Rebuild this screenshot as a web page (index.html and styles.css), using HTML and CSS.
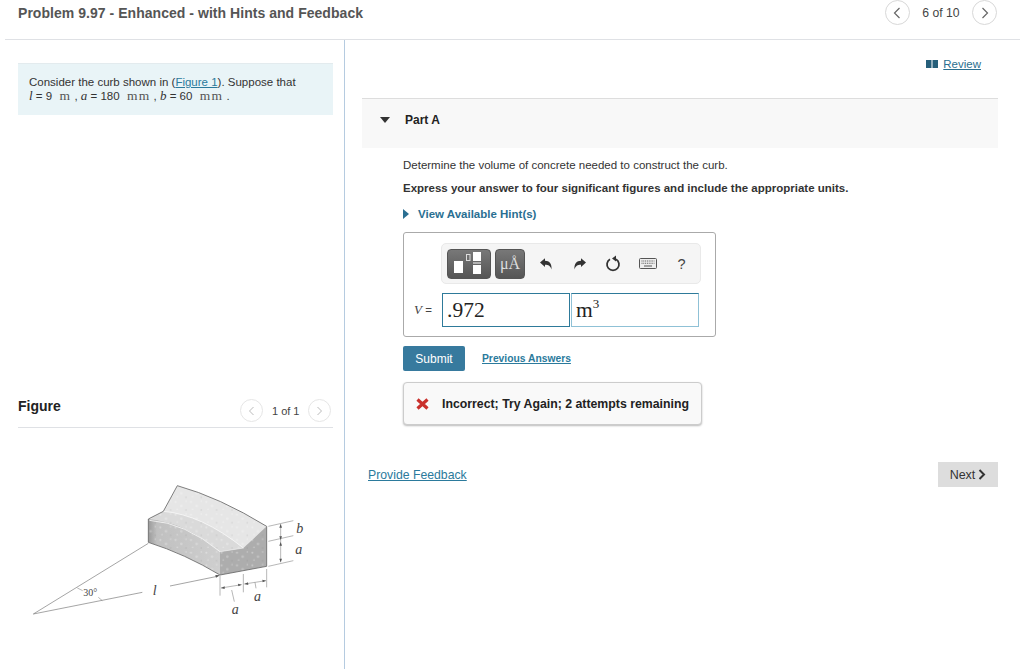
FILE: index.html
```html
<!DOCTYPE html>
<html lang="en">
<head>
<meta charset="utf-8">
<title>Problem 9.97</title>
<link rel="stylesheet" href="styles.css">
</head>
<body>
<header class="top">
  <h1 class="title">Problem 9.97 - Enhanced - with Hints and Feedback</h1>
  <nav class="pager">
    <span class="circle"><svg width="8" height="12" viewBox="0 0 8 12"><path d="M6.500 1L1.500 6l5 5" fill="none" stroke="#666" stroke-width="1.200"/></svg></span>
    <span class="pager-text">6 of 10</span>
    <span class="circle"><svg width="8" height="12" viewBox="0 0 8 12"><path d="M1.500 1l5 5-5 5" fill="none" stroke="#666" stroke-width="1.200"/></svg></span>
  </nav>
</header>
<div class="columns">
  <aside class="left">
    <div class="info">
      Consider the curb shown in (<a href="#" class="link">Figure 1</a>). Suppose that<br>
      <i class="mi">l</i> = 9 &nbsp;<span class="mu">m</span> , <i class="mi">a</i> = 180 &nbsp;<span class="mu">mm</span> , <i class="mi">b</i> = 60 &nbsp;<span class="mu">mm</span> .
    </div>
    <div class="fig-head">
      <h2 class="fig-title">Figure</h2>
      <div class="fig-pager">
        <span class="circle small"><svg width="7" height="10" viewBox="0 0 7 10"><path d="M5.500 1l-4 4 4 4" fill="none" stroke="#bbb" stroke-width="1"/></svg></span>
        <span class="fig-count">1 of 1</span>
        <span class="circle small"><svg width="7" height="10" viewBox="0 0 7 10"><path d="M1.500 1l4 4-4 4" fill="none" stroke="#bbb" stroke-width="1"/></svg></span>
      </div>
    </div>
    <svg class="figure" width="300" height="150" viewBox="0 0 900 450">
      <defs>
        <filter id="soft"><feGaussianBlur stdDeviation="1.400"/></filter>
        <pattern id="speck" width="46" height="38" patternUnits="userSpaceOnUse">
          <circle cx="7" cy="8" r="3" fill="#fff" opacity=".35"/>
          <circle cx="24" cy="20" r="4" fill="#fff" opacity=".25"/>
          <circle cx="38" cy="6" r="2" fill="#fff" opacity=".4"/>
          <circle cx="12" cy="30" r="2.500" fill="#fff" opacity=".3"/>
          <circle cx="38" cy="32" r="2.500" fill="#666" opacity=".12"/>
        </pattern>
        <linearGradient id="frontFace" x1="0" x2="1" y1="0" y2="0">
          <stop offset="0" stop-color="#9a9a9a"/>
          <stop offset=".12" stop-color="#c0c0c0"/>
          <stop offset="1" stop-color="#cfcfcf"/>
        </linearGradient>
      </defs>
      <g filter="url(#soft)">
        <path d="M472 35Q598 70 740 157L670 222Q545 122 430 112Z" fill="#e6e6e6"/>
        <path d="M472 35Q598 70 740 157L670 222Q545 122 430 112Z" fill="url(#speck)"/>
        <path d="M385 135L430 112Q545 122 670 222L600 233Q495 142 385 135Z" fill="#dadada"/>
        <path d="M385 135L430 112Q545 122 670 222L600 233Q495 142 385 135Z" fill="url(#speck)"/>
        <path d="M385 135Q495 142 600 233V303Q495 240 385 205Z" fill="url(#frontFace)"/>
        <path d="M385 135Q495 142 600 233V303Q495 240 385 205Z" fill="url(#speck)"/>
        <path d="M600 233L670 222L740 157V277L600 303Z" fill="#adadad"/>
        <path d="M600 233L670 222L740 157V277L600 303Z" fill="url(#speck)"/>
        <path d="M388 139Q495 146 600 233M430 112Q545 122 670 222" fill="none" stroke="#f6f6f6" stroke-width="2.500"/>
        <path d="M600 233L670 222" fill="none" stroke="#eee" stroke-width="2"/>
        <path d="M430 112L472 35Q598 70 740 157V277L600 303Q495 240 385 205V135L430 112" fill="none" stroke="#666" stroke-width="2.500"/>
        <path d="M385 208L40 420L367 355M450 336L592 307" fill="none" stroke="#777" stroke-width="2"/>
        <path d="M745 157L820 140M745 202L820 185M745 277L820 260M782 150V265M600 305V365M670 300V355M740 285V340M603 342L665 332M673 330L738 320M635 348L643 383M705 325L708 343M172 342L188 350M235 370L247 380" fill="none" stroke="#777" stroke-width="1.600"/>
        <path d="M600 304l-14-1 2 8zM782 150l-4 11h8zM782 198l-4-11h8zM782 204l-4 11h8zM782 265l-4-11h8zM603 342l11-5v8zM665 332l-11-3 1 8zM673 330l11-5 1 8zM738 320l-11-3 1 8z" fill="#555"/>
      </g>
      <text x="190" y="365" class="fig-small">30°</text>
      <text x="398" y="362" class="fig-label">l</text>
      <text x="829" y="176" class="fig-label">b</text>
      <text x="826" y="240" class="fig-label">a</text>
      <text x="702" y="382" class="fig-label">a</text>
      <text x="635" y="420" class="fig-label">a</text>
    </svg>
  </aside>
  <main class="right">
    <div class="review-row">
      <a href="#" class="review">
        <svg width="12" height="8" viewBox="0 0 12 8"><path d="M0 0h5.500v8H0zM6.500 0H12v8H6.500z" fill="#265f7a"/></svg>
        <span class="review-text">Review</span>
      </a>
    </div>
    <section class="part">
      <svg class="part-caret" width="10" height="6" viewBox="0 0 10 6"><path d="M0 0h10L5 6z" fill="#333"/></svg>
      <span class="part-title">Part A</span>
    </section>
    <div class="body">
      <p class="q">Determine the volume of concrete needed to construct the curb.</p>
      <p class="express">Express your answer to four significant figures and include the appropriate units.</p>
      <a href="#" class="hint">
        <svg width="6" height="10" viewBox="0 0 6 10"><path d="M0 0l6 5-6 5z" fill="#2a6f92"/></svg>
        View Available Hint(s)
      </a>
      <div class="answer">
        <div class="toolbar">
          <span class="tool tool-frac">
            <svg width="38" height="24" viewBox="0 0 38 24">
              <rect x="4" y="9" width="9" height="12" fill="#fff"/>
              <rect x="16.500" y="2.500" width="3.500" height="6" fill="none" stroke="#ddd"/>
              <rect x="23" y="0" width="8" height="9" fill="#fff"/>
              <rect x="23" y="10.500" width="8" height="1" fill="#fff"/>
              <rect x="23" y="13" width="8" height="9" fill="#fff"/>
            </svg>
          </span>
          <span class="tool tool-mu">μÅ</span>
          <span class="icon-btn icon-undo"><svg width="14" height="14" viewBox="0 0 14 13"><path d="M1 5L6 .8V3.200C10.500 3.200 13 6 12.500 12 11.500 8.500 9.500 7.200 6 7.200V9.500z" fill="#333"/></svg></span>
          <span class="icon-btn icon-redo"><svg width="14" height="14" viewBox="0 0 14 13"><path d="M13 5L8 .8V3.200C3.500 3.200 1 6 1.500 12 2.500 8.500 4.500 7.200 8 7.200V9.500z" fill="#333"/></svg></span>
          <span class="icon-btn icon-reset"><svg width="16" height="17" viewBox="0 0 16 17"><path d="M5 4.200A6 6 0 1 0 11 4.200" fill="none" stroke="#333" stroke-width="1.800"/><path d="M7.500 1v6L3.500 4z" fill="#333" transform="translate(3.500 -.5)"/></svg></span>
          <span class="icon-btn icon-keys"><svg width="18" height="11" viewBox="0 0 18 11"><rect x=".5" y=".5" width="17" height="10" rx="1" fill="#eee" stroke="#555"/><path d="M2.500 3h13M2.500 5.300h13" stroke="#555" stroke-width="1.100" stroke-dasharray="1 .8"/><path d="M5 8h8" stroke="#555"/></svg></span>
          <span class="icon-btn icon-help">?</span>
        </div>
        <div class="input-row">
          <span class="var"><i class="var-v">V</i> =</span>
          <span class="field field-value">.972</span>
          <span class="field field-unit">m<sup class="sup">3</sup></span>
        </div>
      </div>
      <div class="actions">
        <button class="submit" type="button">Submit</button>
        <a href="#" class="prev">Previous Answers</a>
      </div>
      <div class="alert">
        <svg width="13" height="12" viewBox="0 0 13 12"><path d="M1.500 1.500L11.500 10.500M11.500 1.500L1.500 10.500" stroke="#c9302c" stroke-width="3.200"/></svg>
        <span class="alert-text">Incorrect; Try Again; 2 attempts remaining</span>
      </div>
    </div>
    <div class="foot">
      <a href="#" class="feedback">Provide Feedback</a>
      <button class="next" type="button">Next <svg width="8" height="11" viewBox="0 0 8 11"><path d="M1.500 1l4.500 4.500L1.500 10" fill="none" stroke="#333" stroke-width="2"/></svg></button>
    </div>
  </main>
</div>
</body>
</html>
```

FILE: styles.css
```css
* { box-sizing: border-box; }
html, body { margin: 0; padding: 0; height: 100%; overflow: hidden; }
body { background: #fff; color: #333; font-family: "Liberation Sans", Arial, sans-serif; font-size: 12px; }
a { text-decoration: underline; }

.top { display: flex; justify-content: space-between; align-items: center; height: 40px; margin: 0 4px 0 5px; padding: 0 23px 14px 13px; border-bottom: 1px solid #dfe1e5; }
.title { margin: 0; font-size: 14px; line-height: 18px; font-weight: 700; color: #555; letter-spacing: .04px; }
.pager { display: flex; align-items: center; gap: 12.500px; }
.pager-text { font-size: 12.200px; color: #444; }
.circle { display: flex; align-items: center; justify-content: center; width: 25px; height: 25px; border: 1px solid #d8d8d8; border-radius: 50%; background: #fff; }
.circle.small { width: 23px; height: 23px; border-color: #e6e6e6; }

.columns { display: flex; height: 629px; }
.left { flex: 0 0 345px; padding: 23px 11px 0 18px; border-right: 1px solid #b5cbe0; }
.info { height: 52px; padding: 12px 11px 0; background: #e9f4f7; border-top: 1px solid #e3ebee; font-size: 11.500px; line-height: 13px; color: #333; white-space: nowrap; }
.link { color: #2b7a9c; }
.mi { font-family: "Liberation Serif", serif; font-size: 13px; }
.mu { font-family: "Liberation Serif", serif; font-size: 13.500px; line-height: 0; letter-spacing: 1.200px; color: #555; margin-left: 1px; }

.fig-head { display: flex; justify-content: space-between; align-items: center; height: 34px; margin-top: 279px; border-bottom: 1px solid #dfe1e5; }
.fig-title { margin: 0 0 10px; font-size: 14px; font-weight: 700; color: #222; }
.fig-pager { display: flex; align-items: center; gap: 8.500px; padding-right: 2px; }
.fig-count { font-size: 11px; color: #444; }
.figure { display: block; margin: 46px 0 0 2px; }
.fig-label { font-family: "Liberation Serif", serif; font-style: italic; font-size: 42px; fill: #444; }
.fig-small { font-family: "Liberation Serif", serif; font-size: 30px; fill: #444; }

.right { flex: 1; padding: 0 26px 0 17px; min-width: 0; }
.review-row { display: flex; justify-content: flex-end; height: 58px; padding: 17px 17px 0 0; }
.review { display: flex; align-items: center; gap: 5px; height: 14px; color: #2b6f8f; font-size: 11.500px; text-decoration: none; }
.review-text { text-decoration: underline; }

.part { display: flex; align-items: center; height: 50px; padding: 0 0 8px 18px; background: #f8f8f8; border-top: 1px solid #ddd; }
.part-caret { margin-right: 15px; }
.part-title { font-weight: 700; color: #222; }

.body { padding: 9px 0 0 41px; }
.q { margin: 0; height: 16px; line-height: 16px; font-size: 11.500px; }
.express { margin: 7px 0 0; height: 16px; line-height: 16px; font-size: 11.500px; font-weight: 700; color: #333; }
.hint { display: flex; align-items: center; gap: 9px; margin-top: 10px; height: 16px; font-size: 11.500px; font-weight: 700; color: #2a6f92; text-decoration: none; }

.answer { width: 313px; height: 105px; margin-top: 10px; padding: 10px 16px 0 10px; border: 1px solid #aaa; border-radius: 3px; }
.toolbar { display: flex; align-items: center; width: 260px; height: 41px; margin-left: 27px; padding-left: 5px; background: #f5f5f5; border: 1px solid #e9e9e9; border-radius: 5px; }
.tool { display: flex; align-items: center; justify-content: center; height: 30px; border: 1px solid #555; border-radius: 4px; background: linear-gradient(#787878, #555); }
.tool-frac { width: 44px; margin-right: 4px; }
.tool-mu { width: 30px; margin-right: 14px; color: #ddd; font-family: "Liberation Serif", serif; font-size: 16px; }
.icon-btn { display: flex; align-items: center; justify-content: center; }
.icon-undo { width: 14px; }
.icon-redo { margin-left: 10px; width: 33px; }
.icon-reset { width: 34px; }
.icon-keys { width: 36px; }
.icon-help { width: 31px; color: #444; font-size: 14.500px; }

.input-row { display: flex; align-items: stretch; height: 34px; margin-top: 9px; }
.var { width: 28px; align-self: center; font-size: 11.500px; color: #444; white-space: nowrap; }
.var-v { font-family: "Liberation Serif", serif; font-size: 13px; }
.field { display: block; width: 128px; padding-left: 4px; border: 1px solid #2e7a9a; font-family: "Liberation Serif", serif; font-size: 21.500px; line-height: 32px; color: #222; white-space: nowrap; }
.field-unit { margin-left: 1px; width: 128px; border-color: #8fc1d6; border-top-color: #2e7a9a; }
.sup { font-size: 13px; line-height: 0; vertical-align: 9px; }

.actions { display: flex; align-items: center; gap: 17px; margin-top: 9px; height: 25px; }
.submit { width: 62px; height: 25px; padding: 0; border: 0; border-radius: 2px; background: #377a9e; color: #fff; font: 12px "Liberation Sans", Arial, sans-serif; }
.prev { font-size: 10.300px; font-weight: 700; color: #2b7a9c; }

.alert { display: flex; align-items: center; gap: 13px; width: 299px; height: 43px; margin-top: 11px; padding: 1px 0 0 12px; background: #f9f9f9; border: 1px solid #ccc; border-radius: 4px; box-shadow: 0 1px 2px #bbb; }
.alert-text { font-size: 12.300px; font-weight: 700; color: #222; white-space: nowrap; }

.foot { display: flex; justify-content: space-between; align-items: center; height: 25px; margin-top: 37px; padding-left: 6px; }
.feedback { font-size: 12.260px; color: #2b7a9c; }
.next { display: flex; align-items: center; justify-content: center; gap: 3px; width: 60px; height: 25px; padding: 0; border: 0; background: #ddd; color: #333; font: 12.500px "Liberation Sans", Arial, sans-serif; }
```
